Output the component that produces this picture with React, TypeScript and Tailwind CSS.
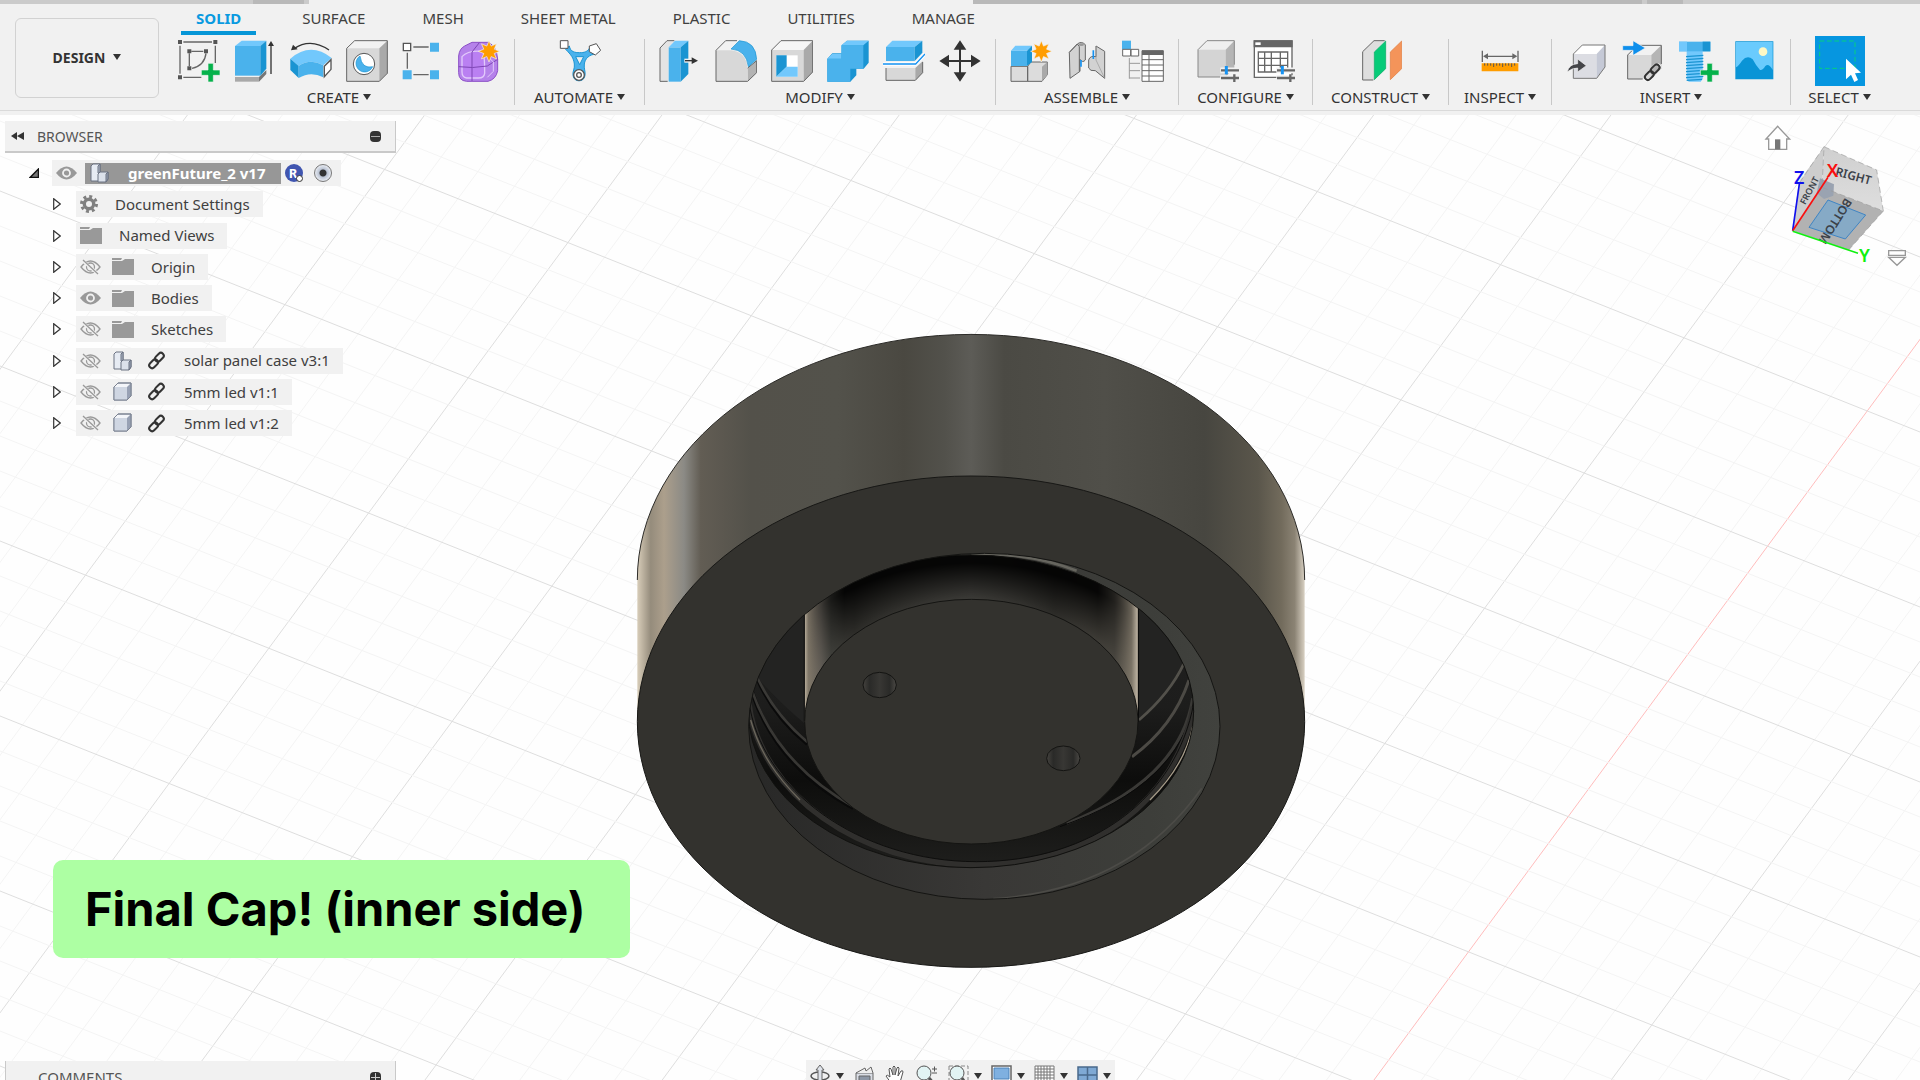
import React from 'react'

const BLUE = '#4ab2ec'
const BLUE_LIGHT = '#72c8fc'
const BLUE_DARK = '#1a94d2'
const LINE = '#666666'

interface IconProps {
	children: React.ReactNode
}

function ToolIcon({ children }: IconProps) {
	return (
		<svg viewBox="0 0 126 126" className="block h-[42px] w-[42px]" fill="none" aria-hidden="true">
			{children}
		</svg>
	)
}

function Star({ x, y }: { x: number; y: number }) {
	const points = Array.from({ length: 16 }, (_, i) => {
		const r = i % 2 === 0 ? 32 : 17
		const a = (i * Math.PI) / 8
		return `${x + r * Math.sin(a)},${y - r * Math.cos(a)}`
	}).join(' ')
	return <polygon points={points} fill="#ff9d00" stroke="#f1f1f1" strokeWidth="2" />
}

function Plus({ x, y }: { x: number; y: number }) {
	return (
		<path
			d={`M${x - 8} ${y - 28}h16v20h20v16h-20v20h-16v-20h-20v-16h20z`}
			fill="#05b24b"
			stroke="#f1f1f1"
			strokeWidth="2"
		/>
	)
}

function Sliders() {
	return (
		<g>
			<path d="M70 91h56M70 114h56" stroke="#f1f1f1" strokeWidth="17" />
			<path d="M72 91h54M72 114h54M112 103v23" stroke="#666" strokeWidth="7" />
			<path d="M88 78v25" stroke="#1592f2" strokeWidth="9" />
		</g>
	)
}

function ChainLink({ color = '#333' }: { color?: string }) {
	return (
		<g stroke={color} strokeWidth="2.500" fill="none" strokeLinecap="round">
			<rect x="11.500" y="1.500" width="7" height="12" rx="3.500" transform="rotate(45 15 7.500)" />
			<rect x="4.500" y="9.500" width="7" height="12" rx="3.500" transform="rotate(45 8 15.500)" />
		</g>
	)
}

const icons: Record<string, React.ReactNode> = {
	sketch: (
		<ToolIcon>
			<path
				d="M16 6h86M6 17v84M112 17v52M16 112h54M40 34h36M34 40v38M84 40Q80 76 42 85"
				stroke={LINE}
				strokeWidth="4"
			/>
			<path d="M0 0h12v12H0zM106 0h12v12h-12zM0 106h12v12H0zM28 28h12v12H28zM78 28h12v12H78zM28 79h12v12H28z" fill="#555" />
			<Plus x={98} y={98} />
		</ToolIcon>
	),
	extrude: (
		<ToolIcon>
			<path d="M3 111h72v14H3z" fill="#a9a9a9" />
			<path d="M75 111l22-21v12l-22 23z" fill="#777" />
			<path d="M3 18h76v89H3z" fill={BLUE} />
			<path d="M3 18L23 2h74L79 18z" fill={BLUE_LIGHT} />
			<path d="M79 18L97 2v84l-18 21z" fill={BLUE_DARK} />
			<path d="M111 102V12" stroke="#333" strokeWidth="4" />
			<path d="M102 18l9-15 9 15z" fill="#333" />
		</ToolIcon>
	),
	revolve: (
		<ToolIcon>
			<path d="M1 56Q62 4 125 54L100 76Q62 54 26 78z" fill={BLUE_LIGHT} />
			<path d="M1 56L26 78V114L1 90z" fill={BLUE_DARK} />
			<path d="M26 78Q62 54 100 76V112Q62 92 26 114z" fill={BLUE} />
			<path d="M103 79l20-20v29l-20 22z" fill="#fff" stroke="#555" strokeWidth="4" />
			<path d="M117 30Q62-8 12 26" stroke="#333" strokeWidth="4" />
			<path d="M3 31L9 14l14 14z" fill="#333" />
		</ToolIcon>
	),
	hole: (
		<ToolIcon>
			<path d="M2 25L26 2h98L100 25z" fill="#f2f2f2" />
			<path d="M2 25h98v99H2z" fill="#d8d8d8" />
			<path d="M100 25l24-23v98l-24 24z" fill="#a9a9a9" />
			<path d="M2 25L26 2h98v98l-24 24H2z" stroke={LINE} strokeWidth="3" />
			<circle cx="54" cy="72" r="32" fill="#fff" stroke="#555" strokeWidth="3" />
			<path d="M42 48A26 26 0 1 0 80 80Q48 88 42 48z" fill={BLUE} stroke={BLUE_DARK} strokeWidth="2" />
		</ToolIcon>
	),
	pattern: (
		<ToolIcon>
			<path d="M34 21h46M16 38v48M34 104h46" stroke={LINE} strokeWidth="4" />
			<path d="M4 10h22v22H4z" fill="#fff" stroke="#555" strokeWidth="4" />
			<path d="M84 8h27v27H84zM2 91h27v27H2zM84 91h27v27H84z" fill={BLUE} />
		</ToolIcon>
	),
	form: (
		<ToolIcon>
			<path d="M2 48Q4 26 20 18L42 7H92Q116 20 119 58V92Q114 118 90 124H26Q2 122 2 98z" fill="#b582ea" stroke="#8b4fc6" strokeWidth="3" />
			<path d="M12 50Q30 30 74 34Q80 40 80 100Q78 114 62 114H26Q12 112 12 96z" fill="#ba80f2" stroke="#e2c9fb" strokeWidth="4" />
			<path d="M42 123V36L64 8M2 80Q42 86 88 78L119 58" stroke="#7e46b5" strokeWidth="3" />
			<path d="M86 46L106 66V94L88 112" stroke="#e2c9fb" strokeWidth="3" />
			<Star x={93} y={34} />
		</ToolIcon>
	),
	automate: (
		<ToolIcon>
			<path
				d="M31 18C34 36 48 38 62 38C76 38 84 36 92 24L110 42C90 44 78 56 76 72C74 86 80 94 78 106C76 128 44 128 42 106C40 94 48 86 46 72C44 54 36 44 20 28z"
				fill={BLUE}
				stroke={BLUE_DARK}
				strokeWidth="3"
			/>
			<path d="M50 50h24L62 74z" fill="#f1f1f1" stroke={BLUE_DARK} strokeWidth="3" />
			<path d="M4 2h23v23H4z" fill="#fff" stroke="#555" strokeWidth="3" />
			<path d="M91 18L112 11L125 31L109 45L91 35z" fill="#fff" stroke="#555" strokeWidth="3" />
			<circle cx="60" cy="105" r="16" fill="#fff" stroke="#555" strokeWidth="4" />
			<circle cx="60" cy="105" r="7" fill="#fff" stroke="#555" strokeWidth="4" />
		</ToolIcon>
	),
	presspull: (
		<ToolIcon>
			<path d="M3 24L24 2H46L28 24V124H3z" fill="#e4e4e4" />
			<path d="M46 2H24L3 24V124H26" stroke={LINE} strokeWidth="3" />
			<path d="M29 22h36v103H29z" fill={BLUE} />
			<path d="M29 22L48 2h40L65 22z" fill={BLUE_LIGHT} />
			<path d="M65 22L88 2v100l-23 23z" fill={BLUE_DARK} />
			<path d="M76 62h30" stroke="#f1f1f1" strokeWidth="12" />
			<path d="M78 62h24" stroke="#333" strokeWidth="4" />
			<path d="M98 52l19 10-19 10z" fill="#333" />
		</ToolIcon>
	),
	fillet: (
		<ToolIcon>
			<path d="M3 31L32 2H72L48 31z" fill="#f2f2f2" />
			<path d="M3 31H48Q94 36 97 84V124H3z" fill="#d8d8d8" />
			<path d="M98 84L125 62V98L98 124z" fill="#b3b3b3" />
			<path d="M66 2H32L3 31V124H98L125 98V62L98 84" stroke={LINE} strokeWidth="3" />
			<path d="M48 27L73 2Q122 4 125 58L100 80Q94 30 48 27z" fill={BLUE} stroke={BLUE_DARK} strokeWidth="2" />
		</ToolIcon>
	),
	shell: (
		<ToolIcon>
			<path d="M2 30L30 2h95L98 30z" fill="#f6f6f6" />
			<path d="M2 30h96v94H2z" fill="#d8d8d8" />
			<path d="M98 30l27-28v94l-27 28z" fill="#a9a9a9" />
			<path d="M2 30L30 2h95v94l-27 28H2z" stroke={LINE} strokeWidth="3" />
			<path d="M16 46h64v64H16z" fill="#fff" />
			<path d="M16 46h31v34L16 110z" fill={BLUE_DARK} />
			<path d="M16 110l31-30h33v30z" fill={BLUE_LIGHT} />
		</ToolIcon>
	),
	combine: (
		<ToolIcon>
			<path d="M1 56L16 40H44V16L60 2h65V68L110 86H88V106L70 125H1z" fill={BLUE_DARK} />
			<path d="M1 56h42V16h66V86H70v39H1z" fill={BLUE} />
			<path d="M1 56L16 41H43V56zM43 16L60 2h65L109 16z" fill={BLUE_LIGHT} />
		</ToolIcon>
	),
	split: (
		<ToolIcon>
			<path d="M9 84h88v37H9z" fill="#d8d8d8" />
			<path d="M97 84l22-20v34l-22 23z" fill="#a9a9a9" />
			<path d="M9 84v37h88l22-23V66" stroke={LINE} strokeWidth="3" />
			<path d="M9 21h86v42H9z" fill={BLUE} />
			<path d="M9 21L28 2h90L95 21z" fill={BLUE_LIGHT} />
			<path d="M95 21L118 2v36L95 63z" fill={BLUE_DARK} />
			<path d="M0 72h98l28-30" stroke="#fff" strokeWidth="10" />
			<path d="M0 72h98l28-30" stroke="#1592f2" strokeWidth="4" />
		</ToolIcon>
	),
	move: (
		<ToolIcon>
			<path d="M63 20v86M20 63h86" stroke="#333" strokeWidth="6" />
			<path d="M44 29L63 1l19 28zM44 97l19 28 19-28zM30 44L1 63l29 19zM96 44l29 19-29 19z" fill="#333" />
		</ToolIcon>
	),
	newComponent: (
		<ToolIcon>
			<path d="M3 79h50v45H3zM53 79L62 66H112V104L96 124H53z" fill="#dcdcdc" stroke={LINE} strokeWidth="3" />
			<path d="M96 80l16-14v38l-16 20z" fill="#a9a9a9" />
			<path d="M3 32h48v46H3z" fill={BLUE} />
			<path d="M3 32L16 17H66L51 32z" fill={BLUE_LIGHT} />
			<path d="M51 32L66 17V66L51 78z" fill={BLUE_DARK} />
			<Star x={94} y={34} />
		</ToolIcon>
	),
	joint: (
		<ToolIcon>
			<path d="M10 37L34 12Q46 2 58 14V60Q50 70 42 58V94L12 115z" fill="#d2d2d2" stroke={LINE} strokeWidth="3" />
			<path d="M10 37L34 12L40 20V94" stroke={LINE} strokeWidth="3" />
			<ellipse cx="46" cy="14" rx="8" ry="4" fill="#999" />
			<path d="M68 60Q72 46 90 50V18L116 34V115L88 92Q72 94 68 84z" fill="#d2d2d2" stroke={LINE} strokeWidth="3" />
			<path d="M90 18V60L116 115" stroke="#999" strokeWidth="2" />
			<path d="M45 60v20M82 31v26" stroke="#1592f2" strokeWidth="5" />
		</ToolIcon>
	),
	bom: (
		<ToolIcon>
			<path d="M0 2h27v27H0z" fill={BLUE} />
			<path d="M2 28h24v20H2zM27 28h23v20H27z" fill="#fff" stroke={LINE} strokeWidth="3" />
			<path d="M22 54v62M22 70h32M22 92h32M22 114h32" stroke="#999" strokeWidth="3" />
			<path d="M60 32h64v92H60z" fill="#fff" stroke={LINE} strokeWidth="3" />
			<path d="M60 32h64v13H60z" fill={LINE} />
			<path d="M60 59h64M60 75h64M60 92h64M60 108h64M81 45v79" stroke={LINE} strokeWidth="3" />
		</ToolIcon>
	),
	configure: (
		<ToolIcon>
			<path d="M3 29L30 2h82L86 29z" fill="#efefef" />
			<path d="M3 29h83v82H3z" fill="#d4d4d4" />
			<path d="M86 29l26-27v80l-26 29z" fill="#b5b5b5" />
			<path d="M70 111H3V29L30 2h82v72" stroke="#888" strokeWidth="3" />
			<Sliders />
		</ToolIcon>
	),
	configTable: (
		<ToolIcon>
			<path d="M4 3h113v109H4z" fill="#fff" stroke={LINE} strokeWidth="4" />
			<path d="M2 1h117v21H2z" fill={LINE} />
			<path d="M7 7h16v8H7z" fill="#fff" />
			<path d="M16 36h88v60H16zM16 55h88M16 76h88M35 36v60M55 36v60M82 36v60" stroke={LINE} strokeWidth="4" />
			<Sliders />
		</ToolIcon>
	),
	plane: (
		<ToolIcon>
			<path d="M8 35L42 2H74L42 35V120H8z" fill="#dedede" />
			<path d="M74 2H42L8 35V120H40" stroke={LINE} strokeWidth="3" />
			<path d="M43 36L77 3V86L43 119z" fill="#06cb78" stroke="#05a861" strokeWidth="2" />
			<path d="M91 36L125 3V86L91 119z" fill="#f4945a" stroke="#e07b3c" strokeWidth="2" />
		</ToolIcon>
	),
	measure: (
		<ToolIcon>
			<path d="M10 32v34M117 32v34M20 49h88" stroke={LINE} strokeWidth="4" />
			<path d="M12 49l15-9v18zM115 49l-15-9v18z" fill={LINE} />
			<path d="M8 70h110v24H8z" fill="#ff9d00" />
			<path d="M17 70v7M26 70v7M35 70v7M44 70v11M53 70v7M62 70v7M71 70v11M80 70v7M89 70v7M98 70v11M107 70v7" stroke="#555" strokeWidth="3" />
		</ToolIcon>
	),
	derive: (
		<ToolIcon>
			<path d="M22 42L49 15h68L92 42z" fill="#fff" />
			<path d="M22 42h70v73H22z" fill="#dcdde3" />
			<path d="M92 42l25-27v66l-25 34z" fill="#c5c9d6" />
			<path d="M22 42L49 15h68v66l-25 34H22z" stroke="#777" strokeWidth="3" />
			<path d="M4 96Q9 72 35 71V57L61 77L35 96V84Q17 84 4 96z" fill="#444549" stroke="#f1f1f1" strokeWidth="2" />
		</ToolIcon>
	),
	insertLink: (
		<ToolIcon>
			<path d="M17 45L46 16h72L88 45z" fill="#f2f2f2" />
			<path d="M17 45h71v72H17z" fill="#d8d8d8" />
			<path d="M88 45l30-29v70l-30 31z" fill="#b5b5b5" />
			<path d="M62 117H17V45L46 16h72v56" stroke={LINE} strokeWidth="3" />
			<path d="M2 17h31V2L70 24L33 46V31H2z" fill="#0d8fec" stroke="#f1f1f1" strokeWidth="2" />
			<g transform="translate(60 66) scale(2.7)">
				<ChainLink color="#fff" />
			</g>
			<g transform="translate(62 68) scale(2.5)">
				<ChainLink />
			</g>
		</ToolIcon>
	),
	fastener: (
		<ToolIcon>
			<path d="M26 33h48v84l-6 8H32l-6-8z" fill={BLUE_LIGHT} />
			<path
				d="M24 50l52-4M24 59l52-4M24 68l52-4M24 77l52-4M24 86l52-4M24 95l52-4M24 104l52-4M24 113l52-4M26 121l46-3"
				stroke={BLUE_DARK}
				strokeWidth="4"
			/>
			<path d="M3 5h94v29H3z" fill={BLUE} />
			<path d="M3 5h24v29H3z" fill={BLUE_LIGHT} />
			<path d="M74 5h23v29H74z" fill={BLUE_DARK} />
			<Plus x={95} y={98} />
		</ToolIcon>
	),
	picture: (
		<ToolIcon>
			<path d="M4 4h114v114H4z" fill="#0a94d6" />
			<path d="M6 6h110v84Q104 68 94 78Q86 92 78 90Q64 74 56 58Q40 44 24 62Q14 78 6 82z" fill="#6acbfd" />
			<circle cx="87" cy="35" r="13" fill="#fff8c4" />
		</ToolIcon>
	),
	select: (
		<svg viewBox="0 0 150 150" className="-my-1 block h-[50px] w-[50px]" fill="none" aria-hidden="true">
			<path d="M0 0h150v150H0z" fill="#0696e0" />
			<path d="M14 15h106v82H14z" stroke="#06d07f" strokeWidth="3" strokeDasharray="14 8" />
			<path d="M93 68V130L108 116L118 138L129 132L120 112L138 110z" fill="#fff" />
		</svg>
	),
}

interface ToolGroupData {
	label: string
	width: string
	tools: string[]
}

const groups: ToolGroupData[] = [
	{ label: 'CREATE', width: 'w-[350px]', tools: ['sketch', 'extrude', 'revolve', 'hole', 'pattern', 'form'] },
	{ label: 'AUTOMATE', width: 'w-[130px]', tools: ['automate'] },
	{ label: 'MODIFY', width: 'w-[351px]', tools: ['presspull', 'fillet', 'shell', 'combine', 'split', 'move'] },
	{ label: 'ASSEMBLE', width: 'w-[183px]', tools: ['newComponent', 'joint', 'bom'] },
	{ label: 'CONFIGURE', width: 'w-[134px]', tools: ['configure', 'configTable'] },
	{ label: 'CONSTRUCT', width: 'w-[136px]', tools: ['plane'] },
	{ label: 'INSPECT', width: 'w-[103px]', tools: ['measure'] },
	{ label: 'INSERT', width: 'w-[239px]', tools: ['derive', 'insertLink', 'fastener', 'picture'] },
	{ label: 'SELECT', width: 'w-[98px]', tools: ['select'] },
]

const tabs = ['SOLID', 'SURFACE', 'MESH', 'SHEET METAL', 'PLASTIC', 'UTILITIES', 'MANAGE']

function Caret() {
	return (
		<svg viewBox="0 0 8 6" className="h-[6px] w-[8px] shrink-0" aria-hidden="true">
			<path d="M0 0h8L4 6z" fill="#333" />
		</svg>
	)
}

function Toolbar() {
	return (
		<header className="relative z-10 bg-[#f1f1f1]">
			<div className="flex h-1">
				<div className="w-[253px] bg-[#cbcbcb]" />
				<div className="w-[51px] bg-[#b9b9b9]" />
				<div className="w-[5px] bg-[#cbcbcb]" />
				<div className="w-[664px]" />
				<div className="w-[669px] bg-[#b9b9b9]" />
				<div className="w-[5px] bg-[#cbcbcb]" />
				<div className="w-[36px] bg-[#b9b9b9]" />
				<div className="flex-1 bg-[#cbcbcb]" />
			</div>
			<div className="flex h-[107px] border-b border-[#dadada]">
				<button
					type="button"
					className="mt-[14px] ml-[15px] flex h-20 w-36 items-center justify-center gap-2 rounded-md border border-[#d2d2d2] pb-[2px] text-[14px] font-bold text-[#333]"
				>
					DESIGN
					<Caret />
				</button>
				<div className="flex flex-col">
					<nav className="flex h-[31px] gap-[57px] pl-[37px] text-[15px]">
						{tabs.map((tab, i) => (
							<button
								key={tab}
								type="button"
								className={
									i === 0
										? '-mr-[11px] -ml-[15px] border-b-4 border-[#0696d7] px-[15px] pt-[2px] font-bold text-[#0a9ae0]'
										: 'border-b-4 border-transparent pt-[2px] text-[#404040]'
								}
							>
								{tab}
							</button>
						))}
					</nav>
					<div className="flex pl-[5px]">
						{groups.map((group) => (
							<section
								key={group.label}
								className={`${group.width} mt-1 flex h-[66px] flex-col items-center border-l border-[#c8c8c8] pt-px first:border-l-0`}
							>
								<div className="flex h-[42px] gap-[14px]">
									{group.tools.map((tool) => (
										<button key={tool} type="button" aria-label={tool}>
											{icons[tool]}
										</button>
									))}
								</div>
								<button type="button" className="mt-[5px] flex items-center gap-1 text-[15px] leading-5 text-[#333]">
									{group.label}
									<Caret />
								</button>
							</section>
						))}
					</div>
				</div>
			</div>
			<div className="h-1" />
		</header>
	)
}

function EyeIcon({ hidden }: { hidden?: boolean }) {
	return (
		<svg viewBox="0 0 21 16" className="h-4 w-[21px] shrink-0" fill="none" aria-hidden="true">
			{hidden ? (
				<g stroke="#999" strokeWidth="1.300">
					<path d="M1 8Q10.500-4 20 8Q10.500 20 1 8z" />
					<circle cx="10.500" cy="8" r="4" />
					<path d="M3 2l15 13" stroke="#f1f1f1" strokeWidth="3" />
					<path d="M3 1l15 14" />
				</g>
			) : (
				<g>
					<path d="M0 8Q10.500-5 21 8Q10.500 21 0 8z" fill="#999" />
					<circle cx="10.500" cy="8" r="3.500" fill="#999" stroke="#f1f1f1" strokeWidth="1.800" />
				</g>
			)}
		</svg>
	)
}

function FolderIcon() {
	return (
		<svg viewBox="0 0 22 17" className="h-[17px] w-[22px] shrink-0" aria-hidden="true">
			<path d="M0 0h10l-1 2H0zM0 3h10l3-2h9v16H0z" fill="#999" />
		</svg>
	)
}

function GearIcon() {
	return (
		<svg viewBox="0 0 18 18" className="h-[18px] w-[18px] shrink-0" fill="none" aria-hidden="true">
			<circle cx="9" cy="9" r="7.500" stroke="#808080" strokeWidth="3" strokeDasharray="2.950 2.940" />
			<circle cx="9" cy="9" r="4.700" stroke="#808080" strokeWidth="3.400" />
		</svg>
	)
}

function ComponentIcon() {
	return (
		<svg viewBox="0 0 19 20" className="h-5 w-[19px] shrink-0" aria-hidden="true">
			<g stroke="#6b7282" strokeLinejoin="round">
				<path d="M1 3l2-2h7v17H1z" fill="#e6ebf3" />
				<path d="M8 3l2-2v9H8z" fill="#aeb6c6" />
				<path d="M8 11l2-2h8v7l-2 3H8z" fill="#dbe1eb" />
				<path d="M16 11l2-2v7l-2 3z" fill="#9aa3b5" />
			</g>
		</svg>
	)
}

function BodyIcon() {
	return (
		<svg viewBox="0 0 19 20" className="h-5 w-[19px] shrink-0" aria-hidden="true">
			<g stroke="#7b8291" strokeLinejoin="round">
				<path d="M1 5l4-4h13v13l-4 4H1z" fill="#f3f5f9" />
				<path d="M1 5h13v13H1z" fill="#cfd6e2" stroke="none" />
				<path d="M14 5l4-4v13l-4 4z" fill="#98a1b4" stroke="none" />
				<path d="M1 5l4-4h13v13l-4 4H1z" fill="none" />
			</g>
		</svg>
	)
}

function LinkIcon() {
	return (
		<svg viewBox="0 0 23 23" className="h-[19px] w-[19px] shrink-0" aria-hidden="true">
			<ChainLink />
		</svg>
	)
}

interface TreeItem {
	name: string
	eye?: 'on' | 'off'
	icon: 'gear' | 'folder' | 'component' | 'body'
	linked?: boolean
}

const treeItems: TreeItem[] = [
	{ name: 'Document Settings', icon: 'gear' },
	{ name: 'Named Views', icon: 'folder' },
	{ name: 'Origin', eye: 'off', icon: 'folder' },
	{ name: 'Bodies', eye: 'on', icon: 'folder' },
	{ name: 'Sketches', eye: 'off', icon: 'folder' },
	{ name: 'solar panel case v3:1', eye: 'off', icon: 'component', linked: true },
	{ name: '5mm led v1:1', eye: 'off', icon: 'body', linked: true },
	{ name: '5mm led v1:2', eye: 'off', icon: 'body', linked: true },
]

const itemIcons = {
	gear: <GearIcon />,
	folder: <FolderIcon />,
	component: <ComponentIcon />,
	body: <BodyIcon />,
}

function BrowserPanel() {
	return (
		<aside className="absolute top-[6px] left-[5px] w-[391px]">
			<div className="flex h-8 items-center border-r border-b-2 border-[#c9c9c9] bg-[#f1f1f1] pr-[14px] pl-[6px]">
				<button type="button" aria-label="Collapse browser">
					<svg viewBox="0 0 13 8" className="h-2 w-[13px]" aria-hidden="true">
						<path d="M6 0v8L0 4zM13 0v8L6 4z" fill="#333" />
					</svg>
				</button>
				<h2 className="ml-[13px] flex-1 text-[14px] text-[#555]">BROWSER</h2>
				<button type="button" aria-label="Hide browser">
					<svg viewBox="0 0 11 11" className="h-[11px] w-[11px]" aria-hidden="true">
						<rect width="11" height="11" rx="4" fill="#333" />
						<path d="M1 5.500h9" stroke="#aaa" />
					</svg>
				</button>
			</div>

			<div className="mt-[7px] flex h-[276px] flex-col justify-between text-[15px] text-[#404040]">
				<div className="flex h-[26px] items-center pl-6">
					<button type="button" aria-label="Collapse root" className="w-[23px]">
						<svg viewBox="0 0 10 10" className="h-[10px] w-[10px]" aria-hidden="true">
							<path d="M9.500 1v8.500H1z" fill="#777" stroke="#111" strokeWidth="1.500" />
						</svg>
					</button>
					<div className="flex h-[26px] items-center bg-[#f1f1f1] pr-[9px] pl-1">
						<EyeIcon />
						<div className="ml-2 flex h-[21px] items-center bg-[#979797] pr-[15px] pl-[5px] font-bold text-white">
							<ComponentIcon />
							<span className="ml-[19px]">greenFuture_2 v17</span>
						</div>
						<svg viewBox="0 0 18 18" className="ml-1 h-[18px] w-[18px]" aria-hidden="true">
							<circle cx="9" cy="9" r="9" fill="#4055b0" />
							<text x="8" y="14" textAnchor="middle" fontSize="13" fontWeight="700" fill="#fff">
								R
							</text>
							<circle cx="14.500" cy="14.500" r="3" fill="#fff" stroke="#333" />
						</svg>
						<input
							type="radio"
							name="active-component"
							aria-label="Activate component"
							defaultChecked
							className="ml-[11px] h-[18px] w-[18px] appearance-none rounded-full border border-[#777] bg-[radial-gradient(circle,#333_0_3px,#b9c2d2_4px,#f4f6fa_9px)]"
						/>
					</div>
				</div>
				{treeItems.map((item) => (
					<div key={item.name} className="flex h-[26px] items-center pl-12">
						<button type="button" aria-label={`Expand ${item.name}`} className="w-[23px]">
							<svg viewBox="0 0 8 12" className="h-3 w-2" aria-hidden="true">
								<path d="M.7 .7v10.600L7.300 6z" fill="#fff" stroke="#333" strokeWidth="1.200" />
							</svg>
						</button>
						<div className="flex h-[26px] items-center bg-[#f1f1f1] pr-[13px] pl-1">
							{item.eye && (
								<span className={item.linked ? 'mr-3' : 'mr-[11px]'}>
									<EyeIcon hidden={item.eye === 'off'} />
								</span>
							)}
							{itemIcons[item.icon]}
							{item.linked && (
								<span className="ml-[15px]">
									<LinkIcon />
								</span>
							)}
							<span className={item.linked ? 'ml-[18px]' : 'ml-[17px]'}>{item.name}</span>
						</div>
					</div>
				))}
			</div>
		</aside>
	)
}

// The ground grid is an orthographic projection, so both line families stay parallel.
function Grid() {
	const lines: React.ReactNode[] = []
	for (let i = -40; i <= 30; i++) {
		const x = 1389 + i * 47.45
		const stroke = i === 0 ? '#ffbcbc' : i % 5 === 0 ? '#dedede' : '#f4f4f4'
		lines.push(<line key={`a${i}`} x1={x + 737} y1={60} x2={x - 74} y2={1160} stroke={stroke} />)
	}
	for (let i = -28; i <= 26; i++) {
		const y = 191 + i * 35
		lines.push(<line key={`b${i}`} x1={0} y1={y} x2={1920} y2={y + 766} stroke={i % 5 === 0 ? '#dedede' : '#f4f4f4'} />)
	}
	return <g>{lines}</g>
}

function Cap() {
	return (
		<g transform="translate(740 540) scale(0.33333)" strokeWidth="3">
			<defs>
				<linearGradient id="wall">
					<stop offset="0" stopColor="#d8cdb9" />
					<stop offset=".02" stopColor="#958c7c" />
					<stop offset=".04" stopColor="#ac9f8c" />
					<stop offset=".07" stopColor="#8b8a85" />
					<stop offset=".095" stopColor="#625d54" />
					<stop offset=".17" stopColor="#53514a" />
					<stop offset=".3" stopColor="#53524b" />
					<stop offset=".4" stopColor="#4a4841" />
					<stop offset=".46" stopColor="#52514b" />
					<stop offset=".5" stopColor="#5d5c57" />
					<stop offset=".55" stopColor="#4b4a44" />
					<stop offset=".7" stopColor="#504f49" />
					<stop offset=".85" stopColor="#474640" />
					<stop offset=".93" stopColor="#5a564b" />
					<stop offset=".965" stopColor="#726b5c" />
					<stop offset=".985" stopColor="#8b8374" />
					<stop offset="1" stopColor="#d8d0c2" />
				</linearGradient>
				<linearGradient id="chamfer">
					<stop offset="0" stopColor="#282827" />
					<stop offset=".5" stopColor="#393836" />
					<stop offset=".85" stopColor="#3d3e3a" />
					<stop offset="1" stopColor="#41423e" />
				</linearGradient>
				<linearGradient id="boss">
					<stop offset="0" stopColor="#c0b5a2" />
					<stop offset=".012" stopColor="#857c6d" />
					<stop offset=".05" stopColor="#66615a" />
					<stop offset=".08" stopColor="#44443f" />
					<stop offset=".15" stopColor="#34332f" />
					<stop offset=".5" stopColor="#454440" />
					<stop offset=".75" stopColor="#34332f" />
					<stop offset=".93" stopColor="#4d4a43" />
					<stop offset=".98" stopColor="#81796b" />
					<stop offset="1" stopColor="#c4b9a8" />
				</linearGradient>
				<radialGradient
					id="shade"
					gradientUnits="userSpaceOnUse"
					cx="0"
					cy="0"
					r="1"
					gradientTransform="translate(694 545) scale(690 500)"
				>
					<stop offset=".7" stopColor="#000" stopOpacity="0" />
					<stop offset=".95" stopColor="#000" stopOpacity=".9" />
				</radialGradient>
				<linearGradient id="shade-fade">
					<stop offset="0" stopColor="#000" />
					<stop offset=".02" stopColor="#333" />
					<stop offset=".12" stopColor="#fff" />
					<stop offset=".88" stopColor="#fff" />
					<stop offset=".98" stopColor="#333" />
					<stop offset="1" stopColor="#000" />
				</linearGradient>
				<mask id="shade-mask">
					<path d="M193 0h1001v545H193z" fill="url(#shade-fade)" />
				</mask>
				<linearGradient id="pit" x1="0" y1="0" x2="0" y2="1">
					<stop offset="0" stopColor="#242423" />
					<stop offset=".5" stopColor="#1d1d1c" />
					<stop offset=".72" stopColor="#0d0d0c" />
					<stop offset="1" stopColor="#20201e" />
				</linearGradient>
				<linearGradient id="pin">
					<stop offset="0" stopColor="#45433f" />
					<stop offset=".2" stopColor="#2a2a28" />
					<stop offset=".5" stopColor="#383734" />
					<stop offset=".8" stopColor="#2a2a28" />
					<stop offset="1" stopColor="#4c4a46" />
				</linearGradient>
				<clipPath id="mouth">
					<ellipse cx="733" cy="559" rx="707" ry="519" />
				</clipPath>
				<clipPath id="bore">
					<ellipse cx="693" cy="514" rx="668" ry="469" />
				</clipPath>
			</defs>

			<path d="M-308 545V120A1001 737 0 0 1 1694 120V545z" fill="url(#wall)" />
			<path d="M-308 120A1001 737 0 0 1 1694 120" fill="none" stroke="#2b2a27" />
			<ellipse cx="693" cy="545" rx="1001" ry="737" fill="#33322e" stroke="#171715" />

			<ellipse cx="733" cy="559" rx="707" ry="519" fill="url(#chamfer)" />
			<path d="M694 43Q860 36 1010 92" fill="none" stroke="#66655e" strokeWidth="8" clipPath="url(#mouth)" />
			<path d="M760 1076Q1170 1050 1385 745" fill="none" stroke="#4c4b47" strokeWidth="5" clipPath="url(#mouth)" />

			<g clipPath="url(#mouth)">
				<g clipPath="url(#bore)">
					<path d="M0 0h1400v1000H0z" fill="url(#pit)" />
					<path d="M50 410Q110 480 193 550V100H0zM1197 540Q1290 460 1335 370V150H1190z" fill="#232322" />
					<g fill="none">
						<path d="M50 412Q100 530 202 612" stroke="#0a0a0a" strokeWidth="11" />
						<path d="M50 408Q100 520 202 606" stroke="#3a3936" strokeWidth="8" />
						<path d="M36 456Q110 680 340 804" stroke="#0a0a0a" strokeWidth="12" />
						<path d="M36 452Q110 670 340 800" stroke="#383734" strokeWidth="8" />
						<path d="M1332 370Q1290 460 1197 540" stroke="#53514b" strokeWidth="8" />
						<path d="M1347 420Q1300 560 1176 650" stroke="#4c4a45" strokeWidth="9" />
						<path d="M1358 475Q1320 720 980 850" stroke="#3a3936" strokeWidth="9" />
						<path d="M1361 484Q1324 732 960 860" stroke="#0a0a0a" />
						<path d="M26 490C60 760 360 974 710 974S1310 780 1361 500" stroke="#302f2d" strokeWidth="18" />
						<path d="M26 480C60 750 360 965 710 965S1310 770 1361 490" stroke="#0e0e0d" />
						<path d="M32 540C60 640 110 710 180 780" stroke="#6b665b" strokeWidth="4" />
						<path d="M1358 560C1340 650 1290 720 1230 780" stroke="#a49a88" strokeWidth="4" />
					</g>
					<path d="M193 545V0h1001V545z" fill="url(#boss)" />
					<path d="M193 545V0h1001V545z" fill="url(#shade)" mask="url(#shade-mask)" />
					<path d="M193 200v345M1195 180v365" stroke="#080808" />
				</g>
				<ellipse cx="693" cy="514" rx="668" ry="469" fill="none" stroke="#11110f" />
			</g>
			<ellipse cx="733" cy="559" rx="707" ry="519" fill="none" stroke="#141412" />

			<ellipse cx="694" cy="545" rx="500" ry="367" fill="#33322e" stroke="#141412" />
			<ellipse cx="419" cy="435" rx="50" ry="38" fill="url(#pin)" stroke="#141412" />
			<ellipse cx="970" cy="655" rx="50" ry="37" fill="url(#pin)" stroke="#141412" />
		</g>
	)
}

function ViewCube() {
	return (
		<svg viewBox="0 0 540 510" className="absolute top-0 right-0 h-[170px] w-[180px]" fill="none" aria-label="View cube">
			<defs>
				<linearGradient id="cube-right" x1="0" y1="0" x2="0" y2="1">
					<stop offset="0" stopColor="#cfcfcf" />
					<stop offset="1" stopColor="#dedede" />
				</linearGradient>
			</defs>
			<g transform="translate(0 -15)">
				<path d="M78 87L113 49L149 87H140V118H86V87z" fill="#fff" stroke="#999" strokeWidth="4" />
				<path d="M105 88h16v30h-16z" fill="#777" />

				<path d="M252 110L410 180L430 303L246 232z" fill="url(#cube-right)" />
				<path d="M252 110L246 232L158 362L176 220z" fill="#cdcdcd" />
				<path d="M246 232L430 303L326 420L158 362z" fill="#b2b2b2" />
				<path d="M240 205l42 18-2 34-28 10-22-18z" fill="#9aa3b1" />
				<path
					d="M252 110L410 180L430 303L246 232zM252 110L176 222M158 362L246 232M430 303L326 420"
					stroke="#9a9a9a"
					strokeWidth="2"
					strokeDasharray="18 10"
				/>
				<path d="M264 270L377 315L316 387L207 352z" fill="#86aac6" stroke="#3f85c4" strokeWidth="3" />
				<g fill="#3b4148" fontWeight="600">
					<text x="284" y="196" fontSize="36" transform="rotate(15 284 196)">RIGHT</text>
					<text x="196" y="286" fontSize="27" transform="rotate(-62 196 286)">FRONT</text>
					<text x="316" y="262" fontSize="36" transform="rotate(122 316 262)">BOTTOM</text>
				</g>
				<path d="M158 362L178 222" stroke="#1010ee" strokeWidth="5" />
				<path d="M158 362L264 202" stroke="#fa0f0f" strokeWidth="5" />
				<path d="M158 364L354 430" stroke="#10f010" strokeWidth="5" />
				<g fontSize="54" fontWeight="600">
					<text x="162" y="222" fill="#1010ee">Z</text>
					<text x="260" y="202" fill="#fa0f0f">X</text>
					<text x="357" y="457" fill="#10f010">Y</text>
				</g>
				<path d="M446 422h50v14h-50zM446 442h50L471 466z" fill="#fff" stroke="#999" strokeWidth="4" />
			</g>
		</svg>
	)
}

const navTools = [
	{
		name: 'Orbit',
		menu: true,
		icon: (
			<g>
				<ellipse cx="10" cy="11" rx="9" ry="4" stroke="#555" strokeWidth="1.500" />
				<path d="M8 17V5H6l4-5 4 5h-2v12z" fill="#dfe3ea" stroke="#666" />
			</g>
		),
	},
	{
		name: 'Look at',
		icon: (
			<g stroke="#666">
				<path d="M2 8h17v12H2z" fill="#d9dde5" />
				<path d="M2 8l9-5 1 3 5-4 2 6" fill="#eee" />
				<path d="M5 11h11v9H5z" fill="#8d97a6" />
			</g>
		),
	},
	{
		name: 'Pan',
		icon: (
			<path
				d="M6 18L1 11q1-2 4 1L4 4q1-2 2 0l2 6V2q1-2 2 0v8l2-7q1-2 2 0l-1 8 3-5q2-1 2 1l-2 7-2 6"
				fill="#fff"
				stroke="#555"
			/>
		),
	},
	{
		name: 'Zoom',
		icon: (
			<g stroke="#555">
				<circle cx="8" cy="8" r="7" fill="#e2f4f4" />
				<path d="M13 13l5 6" strokeWidth="3" />
				<path d="M16 4h5M18.500 1.500v5M16 8h5" />
			</g>
		),
	},
	{
		name: 'Zoom window',
		menu: true,
		icon: (
			<g stroke="#555">
				<path d="M1 1h19v19H1z" stroke="#888" strokeDasharray="4 2" />
				<circle cx="9" cy="8" r="7" fill="#e2f4f4" />
				<path d="M14 13l4 6" strokeWidth="3" />
			</g>
		),
	},
	{
		name: 'Display settings',
		menu: true,
		icon: (
			<g>
				<path d="M1 1h19v15H1z" fill="#fff" stroke="#666" strokeWidth="1.500" />
				<path d="M3 3h15v11H3z" fill="#7fb0e0" stroke="#4d82b8" />
			</g>
		),
	},
	{
		name: 'Grid settings',
		menu: true,
		icon: (
			<path
				d="M1 1h19v18H1zM1 4h19M1 7h19M1 10h19M1 13h19M1 16h19M4 1v18M7 1v18M10 1v18M13 1v18M16 1v18"
				fill="#fff"
				stroke="#777"
			/>
		),
	},
	{
		name: 'Viewports',
		menu: true,
		icon: (
			<path d="M1 2h19v17H1zM10.500 2v17M1 10h19" fill="#7fa9d4" stroke="#4a6a8c" strokeWidth="1.500" />
		),
	},
]

function NavBar() {
	return (
		<div className="absolute bottom-0 left-[42%] flex h-5 w-[309px] items-start justify-between overflow-hidden bg-[#f1f1f1] px-1 pt-[5px]">
			{navTools.map((tool) => (
				<button key={tool.name} type="button" aria-label={tool.name} className="flex items-start gap-1">
					<svg viewBox="0 0 22 21" className="h-[21px] w-[22px]" fill="none" aria-hidden="true">
						{tool.icon}
					</svg>
					{tool.menu && (
						<span className="mt-2">
							<svg viewBox="0 0 8 6" className="h-[6px] w-2" aria-hidden="true">
								<path d="M0 0h8L4 6z" fill="#333" />
							</svg>
						</span>
					)}
				</button>
			))}
		</div>
	)
}

export default function App() {
	return (
		<div className="flex h-screen flex-col overflow-hidden bg-[#fefefe] font-['Noto_Sans','Open_Sans',sans-serif]">
			<Toolbar />
			<main className="relative flex-1 overflow-hidden">
				<svg
					viewBox="0 115 1920 965"
					preserveAspectRatio="xMidYMid slice"
					className="absolute inset-0 h-full w-full"
					aria-label="Model viewport"
				>
					<Grid />
					<Cap />
				</svg>

				<BrowserPanel />
				<ViewCube />

				<div className="absolute bottom-[122px] left-[53px] flex h-[98px] w-[577px] items-center rounded-[10px] bg-[#adffa3] pl-8 font-['Inter',sans-serif] text-[47px] font-bold whitespace-nowrap text-black">
					Final Cap! (inner side)
				</div>

				<div className="absolute bottom-0 left-[5px] flex h-[19px] w-[391px] items-start overflow-hidden border-r border-l border-[#c9c9c9] bg-[#f1f1f1] pr-[14px] pl-8">
					<h2 className="mt-[6px] flex-1 text-[15px] leading-5 text-[#555]">COMMENTS</h2>
					<button type="button" aria-label="Show comments" className="mt-[11px]">
						<svg viewBox="0 0 11 11" className="h-[11px] w-[11px]" aria-hidden="true">
							<rect width="11" height="11" rx="4" fill="#333" />
							<path d="M1 5.500h9M5.500 1v9" stroke="#ccc" />
						</svg>
					</button>
				</div>

				<NavBar />
			</main>
		</div>
	)
}
